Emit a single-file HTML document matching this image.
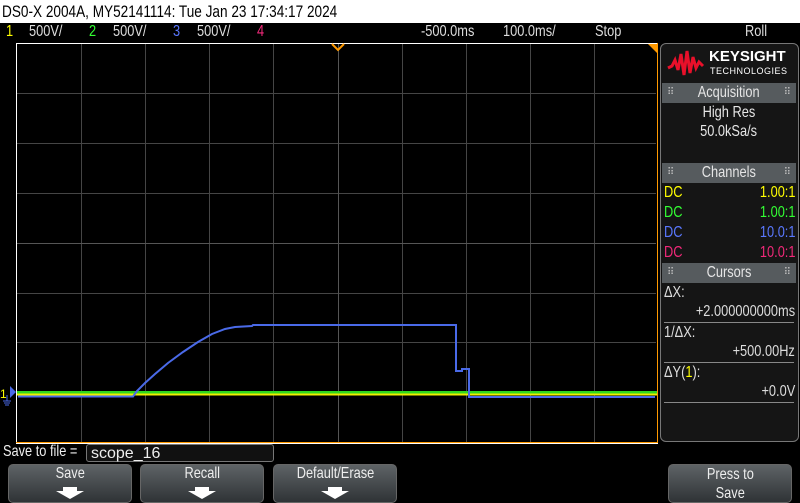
<!DOCTYPE html>
<html><head><meta charset="utf-8"><style>
*{margin:0;padding:0;box-sizing:border-box}
body{width:800px;height:503px;background:#000;position:relative;overflow:hidden;font-family:"Liberation Sans",sans-serif;color:#ddd}
.a{position:absolute;white-space:nowrap}
.t{display:inline-block;transform:scaleX(.8);transform-origin:left center}
.r{display:inline-block;transform:scaleX(.8);transform-origin:right center}
.c{display:inline-block;transform:scaleX(.8);transform-origin:center center}
.hd{position:absolute;left:662px;width:134px;height:20px;background:#565b5e;color:#e6e6e6;font-size:16px;text-align:center;line-height:20px}
.hd:before,.hd:after{content:"⠿";position:absolute;top:0;font-size:10px;color:#bbb}
.hd:before{left:5px}.hd:after{right:5px}
.btn{position:absolute;top:464px;height:39px;width:124px;border-radius:5px;background:linear-gradient(#5e6366,#2f3336);border:1px solid #666;color:#eee;font-size:16px;line-height:17px;text-align:center}
.arr{position:absolute;left:50%;bottom:3px;margin-left:-15px}
.sep{position:absolute;left:664px;width:130px;height:1px;background:#888}
.p{font-size:16px}
</style></head><body>
<div class="a" style="left:0;top:0;width:800px;height:23px;background:#fff;color:#000;font-size:17px;line-height:23px;padding-left:2px"><span class="t">DS0-X 2004A, MY52141114: Tue Jan 23 17:34:17 2024</span></div>
<div class="a" style="top:23px;left:0;font-size:16px;line-height:18px;width:800px;height:20px">
<span class="a t" style="left:6px;color:#ff0">1</span>
<span class="a t" style="left:29px;color:#ddd">500V/</span>
<span class="a t" style="left:89px;color:#3f3">2</span>
<span class="a t" style="left:113px">500V/</span>
<span class="a t" style="left:173px;color:#5a78ff">3</span>
<span class="a t" style="left:197px">500V/</span>
<span class="a t" style="left:257px;color:#f2297a">4</span>
<span class="a t" style="left:421px">-500.0ms</span>
<span class="a t" style="left:503px">100.0ms/</span>
<span class="a t" style="left:595px">Stop</span>
<span class="a t" style="left:745px">Roll</span>
</div>
<svg class="a" style="left:0;top:0" width="660" height="460">
<g stroke="#454545" stroke-width="1">
<line x1="81.5" y1="44" x2="81.5" y2="442"/><line x1="145.5" y1="44" x2="145.5" y2="442"/><line x1="209.5" y1="44" x2="209.5" y2="442"/><line x1="273.5" y1="44" x2="273.5" y2="442"/><line x1="402.5" y1="44" x2="402.5" y2="442"/><line x1="466.5" y1="44" x2="466.5" y2="442"/><line x1="530.5" y1="44" x2="530.5" y2="442"/><line x1="594.5" y1="44" x2="594.5" y2="442"/>
<line x1="17" y1="93.5" x2="656" y2="93.5"/><line x1="17" y1="143.5" x2="656" y2="143.5"/><line x1="17" y1="193.5" x2="656" y2="193.5"/><line x1="17" y1="293.5" x2="656" y2="293.5"/><line x1="17" y1="342.5" x2="656" y2="342.5"/><line x1="17" y1="392.5" x2="656" y2="392.5"/>
</g>
<g stroke="#555"><line x1="338.5" y1="44" x2="338.5" y2="442"/><line x1="17" y1="243.5" x2="656" y2="243.5"/></g>
<line x1="16.5" y1="43" x2="16.5" y2="443" stroke="#fff"/>
<line x1="16" y1="43.5" x2="657" y2="43.5" stroke="#fff"/>
<line x1="657.5" y1="43" x2="657.5" y2="443" stroke="#f90"/>
<line x1="16" y1="442.5" x2="658" y2="442.5" stroke="#f90"/>
<line x1="16" y1="443.5" x2="658" y2="443.5" stroke="#fff"/>
<polygon points="648,44 657,44 657,53" fill="#f90"/>
<polyline points="332,44 338,50 344,44" fill="none" stroke="#f90" stroke-width="2"/>
<rect x="17" y="391" width="640" height="2.5" fill="#2fd61f"/>
<rect x="17" y="393.5" width="640" height="2" fill="#ee0"/>
<path d="M18,396.5 H133 L137,391 L145,383 L155,374 L168,363 L183,352 L198,342 L212,334 L225,329 L235,327 L252,326 L253,325 H456 V371 H462 V369 H469 V397 H655" fill="none" stroke="#4a6ae8" stroke-width="2"/>
<text x="0" y="398" fill="#ff0" font-size="12" font-family="Liberation Sans">1</text>
<polygon points="10,386 16,392 10,398" fill="#4a6ae8"/>
<path d="M7,395 V401 M3,401 H11 M4,403 H10 M5,405 H9" stroke="#4a6ae8" fill="none"/>
</svg>
<div class="a" style="left:660px;top:43px;width:139px;height:399px;background:#151515;border:1px solid #777;border-radius:6px"></div>
<svg class="a" style="left:666px;top:48px" width="40" height="30"><path d="M2,20 L6,18 L9,12 L12,22 L15,6 L18,27 L21,3 L24,25 L27,9 L30,20 L33,14 L37,18" fill="none" stroke="#e8102a" stroke-width="3"/></svg>
<div class="a" style="left:709px;top:48px;font-size:15px;font-weight:bold;color:#fff">KEYSIGHT</div>
<div class="a" style="left:710px;top:66px;font-size:9px;color:#fff;letter-spacing:.5px">TECHNOLOGIES</div>
<div class="hd" style="top:83px"><span class="c">Acquisition</span></div>
<div class="a p" style="left:662px;width:134px;top:104px;text-align:center;color:#e6e6e6"><span class="c">High Res</span></div>
<div class="a p" style="left:662px;width:134px;top:123px;text-align:center;color:#e6e6e6"><span class="c">50.0kSa/s</span></div>
<div class="hd" style="top:163px"><span class="c">Channels</span></div>
<div class="a p" style="left:664px;top:183px;line-height:20px">
<div class="t" style="color:#ff0;display:block">DC</div><div class="t" style="color:#3f3;display:block">DC</div><div class="t" style="color:#5a78ff;display:block">DC</div><div class="t" style="color:#f2297a;display:block">DC</div></div>
<div class="a p" style="right:5px;top:183px;line-height:20px;text-align:right">
<div class="r" style="color:#ff0;display:block">1.00:1</div><div class="r" style="color:#3f3;display:block">1.00:1</div><div class="r" style="color:#5a78ff;display:block">10.0:1</div><div class="r" style="color:#f2297a;display:block">10.0:1</div></div>
<div class="hd" style="top:263px"><span class="c">Cursors</span></div>
<div class="a p" style="left:664px;top:284px"><span class="t">ΔX:</span></div>
<div class="a p" style="right:5px;top:303px"><span class="r">+2.000000000ms</span></div>
<div class="sep" style="top:322px"></div>
<div class="a p" style="left:664px;top:324px"><span class="t">1/ΔX:</span></div>
<div class="a p" style="right:5px;top:343px"><span class="r">+500.00Hz</span></div>
<div class="sep" style="top:362px"></div>
<div class="a p" style="left:664px;top:364px"><span class="t">ΔY(<span style="color:#ff0">1</span>):</span></div>
<div class="a p" style="right:5px;top:383px"><span class="r">+0.0V</span></div>
<div class="sep" style="top:402px"></div>
<div class="a" style="left:3px;top:443px;font-size:16px;color:#eee"><span class="t">Save to file =</span></div>
<div class="a" style="left:86px;top:444px;width:188px;height:18px;border:1px solid #777;border-radius:3px;background:#111;font-size:16px;color:#eee;padding-left:4px;line-height:17px">scope_16</div>
<div class="btn" style="left:8px"><span class="c">Save</span><svg class="arr" width="30" height="12"><polygon points="8,0 22,0 22,4 29,4 15,12 1,4 8,4" fill="#fff"/></svg></div>
<div class="btn" style="left:140px"><span class="c">Recall</span><svg class="arr" width="30" height="12"><polygon points="8,0 22,0 22,4 29,4 15,12 1,4 8,4" fill="#fff"/></svg></div>
<div class="btn" style="left:273px"><span class="c">Default/Erase</span><svg class="arr" width="30" height="12"><polygon points="8,0 22,0 22,4 29,4 15,12 1,4 8,4" fill="#fff"/></svg></div>
<div class="btn" style="left:668px;line-height:19px"><span class="c">Press to</span><br><span class="c">Save</span></div>
</body></html>
